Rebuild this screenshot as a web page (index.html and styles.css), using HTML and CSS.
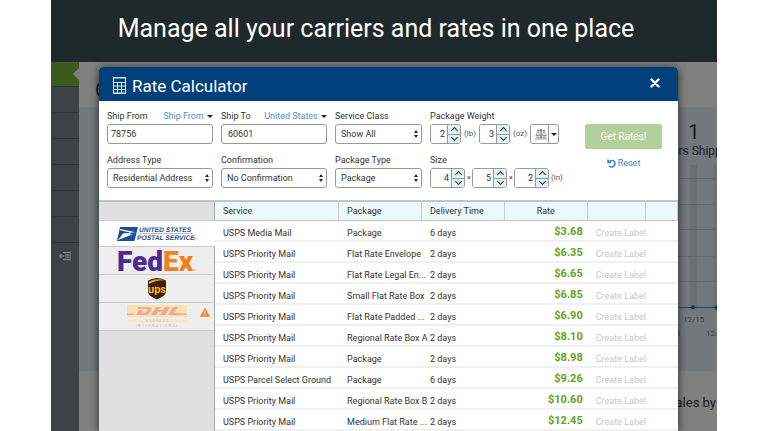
FILE: index.html
```html
<!DOCTYPE html>
<html lang="en">
<head>
    <meta charset="UTF-8">
    <meta name="viewport" content="width=device-width, initial-scale=1.0">
    <title>Rate Calculator</title>
    <link rel="stylesheet" href="styles.css">
</head>
<body>
<div class="slide">
    <h1 class="caption">Manage all your carriers and rates in one place</h1>
    <div class="app">
        <nav class="sidebar">
            <div class="item active"></div>
            <div class="item"></div>
            <div class="item"></div>
            <div class="item"></div>
            <div class="item"></div>
            <div class="item"></div>
            <div class="item"></div>
            <div class="collapse">
                <svg width="12" height="10" viewBox="0 0 12 10" fill="none" stroke="#8b8f92"><path d="M4 1.5h8M6 4h6M6 6.2h6M4 8.7h8M0 5h5M2.5 3 .5 5l2 2"/></svg>
            </div>
        </nav>
        <main class="dashboard">
            <div class="welcome">O</div>
            <div class="panel">
                <div class="stat">
                    <b>1</b>
                    <span>Orders Shipped</span>
                </div>
                <svg class="chart" width="64" height="206" viewBox="0 0 64 206">
                    <path d="M37 0h7v142h-7zM60 0h4v142h-4z" fill="#6a7073"/>
                    <path d="M0 13.5h64M0 39.5h64M0 64.5h64M0 91.5h64M0 116.5h64" stroke="#62686b"/>
                    <path d="M0 142.5h64" stroke="#1f4463"/>
                    <circle cx="40" cy="142.500" r="2" fill="#12304c"/>
                    <circle cx="63.500" cy="142.500" r="2" fill="#12304c"/>
                    <text x="30" y="157">12/15</text>
                    <text x="6" y="171">12/14</text>
                    <text x="53" y="171">12/16</text>
                </svg>
            </div>
            <h2 class="sales">Sales by</h2>
        </main>

        <section class="modal">
            <header class="modal-head">
                <svg width="13" height="17" viewBox="0 0 13 17"><path fill="#dfe9f3" fill-rule="evenodd" d="M0 0h13v17H0zM1 1.500v3.500h11v-3.500zM1 6v2.500h3V6zM5 6v2.500h3V6zM9 6v2.500h3V6zM1 9.500v2.500h3v-2.500zM5 9.500v2.500h3v-2.500zM9 9.500v2.500h3v-2.500zM1 13v2.500h3v-2.500zM5 13v2.500h3v-2.500zM9 13v2.500h3v-2.500z"/></svg>
                <h2>Rate Calculator</h2>
                <button class="close" aria-label="Close">
                    <svg width="10" height="10" viewBox="0 0 10 10"><path d="M1.500 1.500l7 7M8.500 1.500l-7 7" stroke="#fff" stroke-width="2.400" stroke-linecap="round"/></svg>
                </button>
            </header>

            <form class="form">
                <div class="field">
                    <div class="label"><label for="from">Ship From</label><a href="#">Ship From <i class="caret"></i></a></div>
                    <input class="box" id="from" type="text" value="78756">
                </div>
                <div class="field">
                    <div class="label"><label for="to">Ship To</label><a href="#">United States <i class="caret"></i></a></div>
                    <input class="box zip" id="to" type="text" value="60601">
                </div>
                <div class="field">
                    <div class="label"><label for="class">Service Class</label></div>
                    <select class="box" id="class"><option>Show All</option></select>
                </div>
                <div class="field">
                    <div class="label"><label for="lb">Package Weight</label></div>
                    <div class="row">
                        <div class="spin"><input id="lb" type="text" value="2"><div class="steps"><button type="button" aria-label="Up"></button><button type="button" class="down" aria-label="Down"></button></div></div>
                        <label class="unit" for="lb">(lb)</label>
                        <div class="spin"><input id="oz" type="text" value="3"><div class="steps"><button type="button" aria-label="Up"></button><button type="button" class="down" aria-label="Down"></button></div></div>
                        <label class="unit" for="oz">(oz)</label>
                        <button type="button" class="scale" aria-label="Read scale">
                            <svg width="12" height="11" viewBox="0 0 12 11" fill="none" stroke="#777" stroke-width=".7"><path d="M5.500 0v9M6.500 0v9M2 1.500h8M3 1.500l-2 5h3.500zM9 1.500l-1.500 5H11zM.5 7h4M7.500 7h4M0 10h12M1 8.700h10"/></svg>
                            <span><i class="caret"></i></span>
                        </button>
                    </div>
                </div>
                <div class="actions">
                    <button type="button" class="get">Get Rates!</button>
                    <a href="#" class="reset"><svg width="9" height="9" viewBox="0 0 9 9" fill="none" stroke="#3d82c8" stroke-width="1.500"><path d="M1 .5v3h3M1.500 3.200C3.500.3 8 1 8 4.600 8 8 4 9 2 7"/></svg>Reset</a>
                </div>
                <div class="field">
                    <div class="label"><label for="addr">Address Type</label></div>
                    <select class="box" id="addr"><option>Residential Address</option></select>
                </div>
                <div class="field">
                    <div class="label"><label for="conf">Confirmation</label></div>
                    <select class="box" id="conf"><option>No Confirmation</option></select>
                </div>
                <div class="field">
                    <div class="label"><label for="pack">Package Type</label></div>
                    <select class="box" id="pack"><option>Package</option></select>
                </div>
                <div class="field">
                    <div class="label"><label for="len">Size</label></div>
                    <div class="row size">
                        <div class="spin"><input id="len" type="text" value="4"><div class="steps"><button type="button" aria-label="Up"></button><button type="button" class="down" aria-label="Down"></button></div></div>
                        <span class="times">×</span>
                        <div class="spin"><input aria-label="Width" type="text" value="5"><div class="steps"><button type="button" aria-label="Up"></button><button type="button" class="down" aria-label="Down"></button></div></div>
                        <span class="times">×</span>
                        <div class="spin"><input aria-label="Height" type="text" value="2"><div class="steps"><button type="button" aria-label="Up"></button><button type="button" class="down" aria-label="Down"></button></div></div>
                        <span class="unit">(in)</span>
                    </div>
                </div>
            </form>

            <div class="results">
                <aside class="carriers">
                    <div class="carrier on">
                        <svg width="80" height="18" viewBox="0 0 80 18">
                            <path d="M3 2h18l-3.500 14H0z" fill="#1c4f91"/>
                            <path d="M3 4l12 2.500c3 .3 3.500 1.500 1.500 2.500L1 15l5-6.500 8-.7L2.500 5z" fill="#fff"/>
                            <path d="M14 7.500h4l-1 2h-4z" fill="#1c4f91"/>
                            <path d="M22 8.500h54" stroke="#e9a5a0"/>
                            <g fill="#1c4f91" font-family="'Liberation Sans', sans-serif" font-weight="bold" font-style="italic" font-size="6.700" text-rendering="geometricPrecision"><text x="22" y="7">UNITED STATES</text><text x="20" y="15">POSTAL SERVICE</text></g>
                            <circle cx="78" cy="14" r="1.200" fill="none" stroke="#7c9abf" stroke-width=".6"/>
                        </svg>
                    </div>
                    <div class="carrier">
                        <svg width="80" height="26" viewBox="0 -1 80 26">
                            <text x="0" y="22" font-family="Roboto, sans-serif" font-weight="900" font-size="28" fill="#4b2a91">Fed<tspan fill="#f57f20">Ex</tspan></text>
                            <circle cx="77" cy="21" r="1" fill="#f9a866"/>
                        </svg>
                    </div>
                    <div class="carrier">
                        <svg width="20" height="24" viewBox="0 0 20 24">
                            <path d="M1 3.500Q10-1.500 19 3.500v10c0 5-4 6.500-9 9-5-2.500-9-4-9-9z" fill="#3f1d12"/>
                            <path d="M2 4.500Q8 1 18 3.200 8 3 2 7z" fill="#e9a51d"/>
                            <text x="10" y="16" text-anchor="middle" font-family="Roboto, sans-serif" font-weight="bold" font-size="11" fill="#f8b320">ups</text>
                        </svg>
                    </div>
                    <div class="carrier dhl">
                        <svg width="60" height="25" viewBox="0 0 60 25">
                            <path d="M0 1h60v12H0z" fill="#f6e3ad"/>
                            <path d="M0 15h60v3H0z" fill="#f3ead0"/>
                            <path fill="#eba9a2" fill-rule="evenodd" d="M11 3h11q4 0 2 4t-6 4H9l3-5h4l-1.500 3H18q3-2 2-4H10zM29 3h5l-2 3h4l2-3h5l-5 8h-5l2-3h-4l-2 3h-5zM46 3h5l-4 6h6l-1 2H41zM0 9.500h7l-1 1.500H0zM53 9.500h7V11h-8z"/>
                            <g fill="#dfb9b5" font-family="Roboto, sans-serif" font-size="4" text-anchor="middle"><text x="30" y="18">E X P R E S S</text><text x="30" y="23">I N T E R N A T I O N A L</text></g>
                        </svg>
                        <svg class="warn" width="10" height="9" viewBox="0 0 10 9"><path d="M5 .3 9.700 8.500H.3z" fill="#f58220" stroke="#f58220" stroke-linejoin="round" stroke-width=".6"/><path d="M5 3v2.800M5 6.500v1.200" stroke="#fff"/></svg>
                    </div>
                </aside>
                <div class="grid">
                <table class="rates">
                    <colgroup><col class="c-service"><col class="c-mid"><col class="c-mid"><col class="c-mid"><col class="c-label"><col class="c-end"></colgroup>
                    <thead>
                        <tr><th>Service</th><th>Package</th><th>Delivery Time</th><th class="num">Rate</th><th></th><th></th></tr>
                    </thead>
                    <tbody>
                        <tr><td>USPS Media Mail</td><td>Package</td><td>6 days</td><td class="price">$3.68</td><td class="create">Create Label</td><td></td></tr>
                        <tr><td>USPS Priority Mail</td><td>Flat Rate Envelope</td><td>2 days</td><td class="price">$6.35</td><td class="create">Create Label</td><td></td></tr>
                        <tr><td>USPS Priority Mail</td><td>Flat Rate Legal En...</td><td>2 days</td><td class="price">$6.65</td><td class="create">Create Label</td><td></td></tr>
                        <tr><td>USPS Priority Mail</td><td>Small Flat Rate Box</td><td>2 days</td><td class="price">$6.85</td><td class="create">Create Label</td><td></td></tr>
                        <tr><td>USPS Priority Mail</td><td>Flat Rate Padded ...</td><td>2 days</td><td class="price">$6.90</td><td class="create">Create Label</td><td></td></tr>
                        <tr><td>USPS Priority Mail</td><td>Regional Rate Box A</td><td>2 days</td><td class="price">$8.10</td><td class="create">Create Label</td><td></td></tr>
                        <tr><td>USPS Priority Mail</td><td>Package</td><td>2 days</td><td class="price">$8.98</td><td class="create">Create Label</td><td></td></tr>
                        <tr><td>USPS Parcel Select Ground</td><td>Package</td><td>6 days</td><td class="price">$9.26</td><td class="create">Create Label</td><td></td></tr>
                        <tr><td>USPS Priority Mail</td><td>Regional Rate Box B</td><td>2 days</td><td class="price">$10.60</td><td class="create">Create Label</td><td></td></tr>
                        <tr><td>USPS Priority Mail</td><td>Medium Flat Rate ...</td><td>2 days</td><td class="price">$12.45</td><td class="create">Create Label</td><td></td></tr>
                    </tbody>
                </table>
                </div>
            </div>
        </section>
    </div>
</div>
</body>
</html>
```

FILE: styles.css
```css
*{box-sizing:border-box;}
html,body,h1,h2{margin:0; padding:0;}
body{background:#fff; color:#333; font:9px/14px Roboto, "Liberation Sans", sans-serif;}
input,select,button{margin:0; padding:0; font:inherit; color:inherit;}
a{color:#4a90d9; text-decoration:none;}
svg{display:block; flex:none;}

.slide{display:flex; flex-direction:column; height:100vh; margin:0 51px; overflow:hidden; background:#80807f;}
.caption{padding:13px 16px 17px 0; background:#1f292b; color:#fff; font-size:25px; line-height:32px; font-weight:400; text-align:center;}
.app{position:relative; display:flex; flex:1; min-height:0;}

/* left navigation, dimmed */
.sidebar{width:28px; background:#3d4245;}
.item{height:26px; border-bottom:1px solid #2e3235;}
.active{height:25px; background:#3b5a1c; border-top:1px solid #4f5a45;}
.active::after{content:""; display:block; width:6px; height:12px; margin:5px 0 0 22px; background:#80807f; clip-path:polygon(100% 0, 0 50%, 100% 100%);}
.collapse{display:flex; justify-content:center; padding-top:8px;}

/* dashboard behind the modal */
.dashboard{flex:1; min-width:0; background:#80807f; color:#191b1c;}
.welcome{padding:14px 0 0 16px; height:45px; font-size:20px; line-height:28px;}
.panel{display:flex; flex-direction:column; align-items:flex-end; height:264px; background:#72787b;}
.stat{display:flex; flex-direction:column; align-items:center; width:46px; padding-top:14px; height:58px; font-size:12px; line-height:16px; white-space:nowrap;}
.stat b{font-size:21px; line-height:22px; font-weight:400;}
.chart text{font:8px Roboto, sans-serif; fill:#3c4144;}
.sales{padding:22px 1px 0 0; font-size:13px; line-height:20px; font-weight:400; text-align:right;}

.modal{position:absolute; top:5px; right:39px; bottom:0; left:48px; display:flex; flex-direction:column; overflow:hidden; border-radius:4px 4px 0 0; background:#fff; box-shadow:0 1px 8px rgba(0,0,0,.7);}
.modal-head{display:flex; align-items:center; gap:6px; height:34px; padding:3px 17px 0 14px; background:#00417c; color:#fff;}
.modal-head h2{flex:1; font-size:17px; line-height:22px; font-weight:400;}
.close{align-self:flex-start; margin-top:7px; padding:1px; border:0; background:none;}

.form{display:grid; grid-template-columns:106fr 106fr 87fr 147fr 77fr; gap:9px 8px; padding:8px 16px 12px 8px;}
.field{min-width:0;}
.label{display:flex; justify-content:space-between; height:15px; white-space:nowrap;}
.box{display:block; width:100%; height:20px; padding:0 5px; border:1px solid #999; border-radius:3px; background:#fff;}
input.box{padding:0 3px;}
input.zip{padding:0 6px;}
select.box{appearance:none; background:#fff url("data:image/svg+xml,%3Csvg xmlns='http://www.w3.org/2000/svg' width='4' height='8'%3E%3Cpath d='M0 3l2-3 2 3zM0 5l2 3 2-3z' fill='%23222'/%3E%3C/svg%3E") no-repeat right 3px center;}
.caret{display:inline-block; margin-left:1px; border:solid transparent; border-width:3px 3px 0; border-top-color:#222; vertical-align:middle;}
.row{display:flex; align-items:center; gap:3px;}
.size{gap:2px;}
.spin{display:flex; width:31px; height:20px; overflow:hidden; border:1px solid #999; border-radius:3px;}
.size .spin{width:35px;}
.spin input{flex:1; width:0; padding-right:2px; border:0; text-align:right;}
.steps{display:flex; flex-direction:column; width:13px; border-left:1px solid #999; background:#dff2f7;}
.steps button{display:flex; flex:1; justify-content:center; align-items:center; border:0; background:none;}
.steps button::before{content:""; width:4px; height:4px; margin-top:2px; border:solid #333; border-width:1px 0 0 1px; transform:rotate(45deg);}
.steps .down{border-top:1px solid #999;}
.steps .down::before{margin:0 0 2px; transform:rotate(225deg);}
.unit{min-width:12px; color:#555; font-size:8px;}
.times{width:3px; font-size:7px;}
.scale{display:flex; align-items:center; justify-content:space-between; width:29px; height:20px; padding-left:4px; border:1px solid #999; border-radius:3px; background:#fff;}
.scale span{display:flex; justify-content:center; align-items:center; width:10px; height:18px; border-left:1px solid #999;}
.scale .caret{margin:0;}
.actions{grid-row:span 2; padding-top:15px;}
.get{display:block; width:100%; height:25px; border:0; border-radius:2px; background:#b2d09b; color:#fff; font-size:10px;}
.reset{display:flex; justify-content:center; align-items:center; gap:2px; margin-top:7px; color:#3d82c8;}

.results{display:flex; flex:1; min-height:0; border-top:2px solid #c4c6c6;}
.carriers{width:116px; padding-top:18px; background:#e0e0e0; border-right:1px solid #aaa;}
.carrier{position:relative; display:flex; justify-content:center; align-items:center; height:28px; border-bottom:1px solid #ccc; background:#eee;}
.carrier.on{height:27px; margin-right:-1px; background:#fff; border-top:1px solid #ccc;}
.warn{position:absolute; top:5px; right:4px;}

.grid{flex:1; min-width:0;}
.rates{width:100%; table-layout:fixed; border-collapse:separate; border-spacing:0;}
.c-service{width:26.8%;}
.c-mid{width:17.9%;}
.c-label{width:12.6%;}
.c-end{width:6.9%;}
.rates th,.rates td{height:21px; padding:4px 0 0 8px; border-bottom:2px solid #f0f0f0; font-weight:400; text-align:left; white-space:nowrap;}
.rates th{height:19px; padding:0 0 0 8px; border-right:1px solid #c8cdcf; border-bottom:1px solid #c2c8ca; background:#edf8fa;}
.rates th.num{padding:0 4px; text-align:center;}
.rates td.price{padding:3px 5px 0 0; color:#5da423; font-size:11px; font-weight:700; text-align:right;}
.rates td.create{color:#c8c8c8;}
```
